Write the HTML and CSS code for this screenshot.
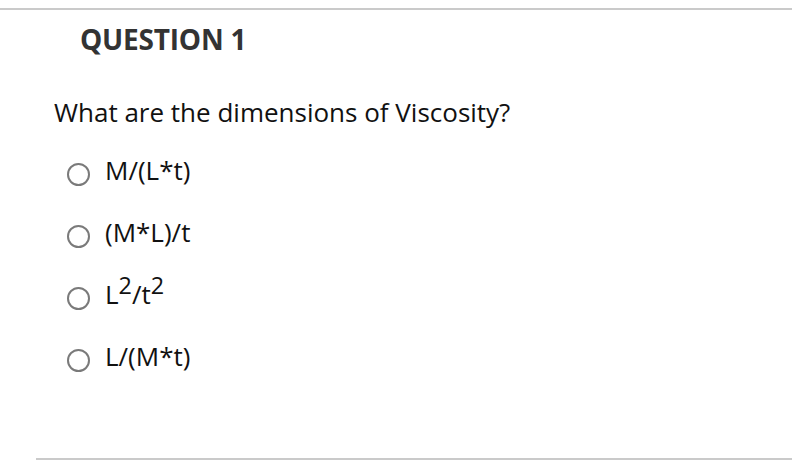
FILE: index.html
```html
<!DOCTYPE html>
<html>
<head>
<meta charset="utf-8">
<link rel="stylesheet" href="styles.css">
</head>
<body>
<div class="page">
  <div class="top-rule"></div>
  <h2 class="q-title">QUESTION 1</h2>
  <div class="q-body">
    <p class="q-text">What are the dimensions of Viscosity?</p>
    <ul class="options">
      <li class="option"><span class="radio"></span><span class="label">M/(L*t)</span></li>
      <li class="option"><span class="radio"></span><span class="label">(M*L)/t</span></li>
      <li class="option"><span class="radio"></span><span class="label">L<sup>2</sup>/t<sup>2</sup></span></li>
      <li class="option"><span class="radio"></span><span class="label">L/(M*t)</span></li>
    </ul>
  </div>
  <div class="bottom-rule"></div>
</div>
</body>
</html>
```

FILE: styles.css
```css
* { box-sizing: border-box; }
html, body { margin: 0; padding: 0; background: #fff; }
body { font-family: "Open Sans", "Liberation Sans", sans-serif; color: #111; }
.page { width: 792px; height: 462px; padding-top: 8px; display: flex; flex-direction: column; }
.top-rule { height: 2px; background: #cacaca; flex: none; }
.q-title { margin: 10px 0 0 80px; font-size: 28px; font-weight: 700; color: #333; line-height: 38px; letter-spacing: -0.2px; }
.q-body { padding-left: 54px; }
.q-text { margin: 37px 0 0 0; font-size: 26px; line-height: 34px; color: #111; }
.options { list-style: none; margin: 24px 0 0 0; padding: 0 0 0 13px; display: flex; flex-direction: column; gap: 28px; }
.option { display: flex; align-items: flex-start; height: 34px; font-size: 26px; }
.radio { width: 23px; height: 23px; margin-top: 10px; border: 2px solid #7a7a7a; border-radius: 50%; flex: none; }
.label { margin-left: 15px; line-height: 34px; }
.label sup { font-size: 0.9em; line-height: 0; vertical-align: 0.42em; }
.bottom-rule { margin: auto 0 2px 36px; height: 2px; background: #cacaca; flex: none; }
```
